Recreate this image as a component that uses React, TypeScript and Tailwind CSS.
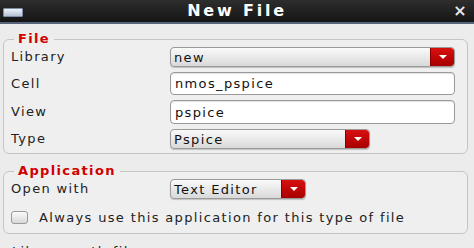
import * as React from "react";

function Arrow() {
  return (
    <svg width="10" height="6" viewBox="0 0 10 6" className="block">
      <path d="M1 1 L9 1 L5 5 Z" fill="#ffffff" />
    </svg>
  );
}

function Select({ value, width }: { value: string; width: string }) {
  return (
    <div
      className={`${width} h-[20px] flex rounded-[4px] border border-[#9a9a9a] bg-gradient-to-b from-[#fafafa] to-[#d9d9d9] overflow-hidden shadow-[0_1px_1px_rgba(0,0,0,0.2)]`}
    >
      <div className="flex-1 pl-[3px] flex items-center text-[#111] leading-none">{value}</div>
      <div className="w-[24px] flex items-center justify-center bg-gradient-to-b from-[#d81010] to-[#a80000] border-l border-[#8a0000] rounded-r-[3px]">
        <Arrow />
      </div>
    </div>
  );
}

function Input({ value, height }: { value: string; height: string }) {
  return (
    <div
      className={`w-[285px] ${height} flex items-center pl-[4px] rounded-[4px] border border-[#9a9a9a] bg-white text-[#111] leading-none shadow-[inset_0_1px_1px_rgba(0,0,0,0.12)]`}
    >
      {value}
    </div>
  );
}

function Row({ label, children, className }: { label: string; children: React.ReactNode; className?: string }) {
  return (
    <div className={`flex items-center ${className ?? ""}`}>
      <div className="w-[166px] pl-[7px] text-[#222]">{label}</div>
      {children}
    </div>
  );
}

export default function App() {
  return (
    <div
      className="w-[474px] h-[248px] overflow-hidden bg-[#ececec] text-[13px] tracking-[1.35px]"
      style={{ fontFamily: '"DejaVu Sans", sans-serif' }}
    >
      {/* title bar */}
      <div className="h-[24px] bg-gradient-to-b from-[#2e2e2e] to-[#151515] border-b-2 border-[#56647a] flex items-center relative">
        <div className="ml-[3px] mt-[3px] w-[20px] h-[9px] rounded-[1px] bg-gradient-to-b from-[#eef2f8] to-[#b4c2d8] border border-[#7f8ea8]" />
        <div className="absolute left-0 right-0 top-0 h-[22px] flex items-center justify-center text-white font-bold text-[16px] tracking-[2.8px]">
          New File
        </div>
        <div className="ml-auto mr-[6px] text-[#e8e8e8] text-[16px] font-bold leading-none">×</div>
      </div>

      <div className="px-[3px] pt-[9px]">
        <fieldset className="w-[465px] border border-[#c4c4c4] rounded-[6px] pb-[4px] bg-[#efefef]">
          <legend className="ml-[10px] px-[4px] text-[#d00000] font-bold text-[13px] leading-[12px]">File</legend>
          <Row label="Library" className="mt-[2px]">
            <Select value="new" width="w-[285px]" />
          </Row>
          <Row label="Cell" className="mt-[5px]">
            <Input value="nmos_pspice" height="h-[23px]" />
          </Row>
          <Row label="View" className="mt-[5px]">
            <Input value="pspice" height="h-[24px]" />
          </Row>
          <Row label="Type" className="mt-[5px]">
            <Select value="Pspice" width="w-[200px]" />
          </Row>
        </fieldset>

        <fieldset className="mt-[11px] w-[465px] border border-[#c4c4c4] rounded-[6px] pb-[5px] bg-[#efefef]">
          <legend className="ml-[10px] px-[4px] text-[#d00000] font-bold text-[13px] leading-[12px]">Application</legend>
          <Row label="Open with" className="mt-[2px]">
            <Select value="Text Editor" width="w-[136px]" />
          </Row>
          <div className="flex items-center mt-[9px] pl-[7px] text-[#222]">
            <div className="w-[17px] h-[13px] rounded-[3px] border border-[#9a9a9a] bg-gradient-to-b from-[#fafafa] to-[#d8d8d8]" />
            <span className="ml-[11px]">Always use this application for this type of file</span>
          </div>
        </fieldset>

        <div className="mt-[8px] pl-[9px] text-[#222]">Library path file</div>
      </div>
    </div>
  );
}
